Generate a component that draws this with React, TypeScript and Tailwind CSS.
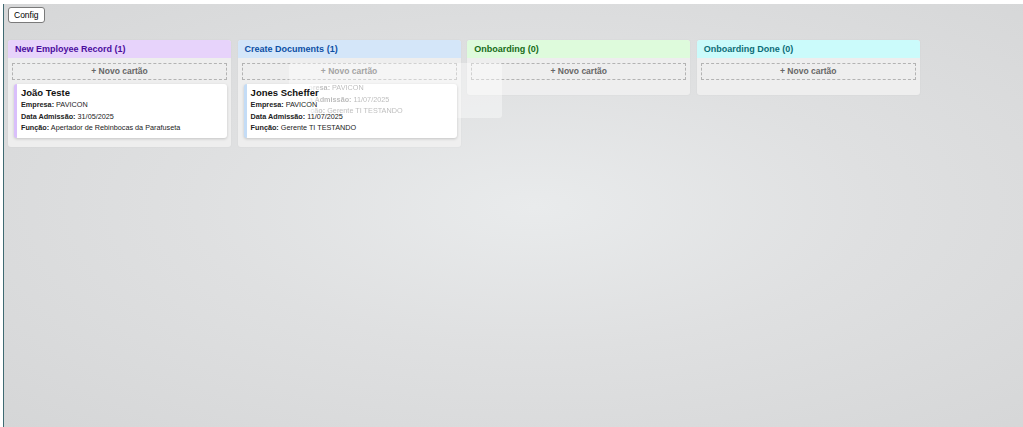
import React from 'react';

type Card = {
  id: string;
  nome: string;
  empresa: string;
  admissao: string;
  funcao: string;
};

type Column = {
  id: string;
  title: string;
  headerBg: string;
  titleColor: string;
  accent: string;
  cards: Card[];
};

const columns: Column[] = [
  {
    id: 'new',
    title: 'New Employee Record',
    headerBg: 'bg-[#e7d3fb]',
    titleColor: 'text-[#4c0d9e]',
    accent: 'border-l-[#d9bffb]',
    cards: [
      {
        id: '1',
        nome: 'João Teste',
        empresa: 'PAVICON',
        admissao: '31/05/2025',
        funcao: 'Apertador de Rebinbocas da Parafuseta',
      },
    ],
  },
  {
    id: 'docs',
    title: 'Create Documents',
    headerBg: 'bg-[#d4e6f9]',
    titleColor: 'text-[#0c4fa5]',
    accent: 'border-l-[#c4dcf6]',
    cards: [
      {
        id: '2',
        nome: 'Jones Scheffer',
        empresa: 'PAVICON',
        admissao: '11/07/2025',
        funcao: 'Gerente TI TESTANDO',
      },
    ],
  },
  {
    id: 'onb',
    title: 'Onboarding',
    headerBg: 'bg-[#defbdc]',
    titleColor: 'text-[#166c17]',
    accent: 'border-l-[#bff0bd]',
    cards: [],
  },
  {
    id: 'done',
    title: 'Onboarding Done',
    headerBg: 'bg-[#cbfbfb]',
    titleColor: 'text-[#0b6d77]',
    accent: 'border-l-[#b2f1f1]',
    cards: [],
  },
];

const CardLines = ({ card }: { card: Card }) => (
  <div className="text-[7.25px] leading-[11.5px] text-[#222]">
    <div>
      <span className="font-bold">Empresa:</span> {card.empresa}
    </div>
    <div>
      <span className="font-bold">Data Admissão:</span> {card.admissao}
    </div>
    <div>
      <span className="font-bold">Função:</span> {card.funcao}
    </div>
  </div>
);

const App = () => {
  const dragged = columns[1].cards[0];

  return (
    <div
      className="h-screen w-full bg-white pl-[3px] pt-[4px]"
      style={{ fontFamily: '"Liberation Sans", Arial, sans-serif' }}
    >
      <div className="relative h-full border-l border-[#3f6a72] bg-[radial-gradient(ellipse_at_52%_48%,#e9ebec_0%,#dfe0e1_45%,#d5d6d7_100%)] pl-[4px] pt-[3px]">
        <button className="block h-[16px] rounded-[3px] border border-[#7a7a7a] bg-white px-[5px] text-[8.5px] leading-none text-black">
          Config
        </button>

        <div className="mt-[17px] flex items-start gap-[6.6px]">
          {columns.map((col) => (
            <div key={col.id} className="w-[223px] rounded-[3px] bg-[#efefef]/90 shadow-[0_0_2px_rgba(0,0,0,0.06)]">
              <div className={`h-[18px] rounded-t-[3px] px-[7px] text-[9px] font-bold leading-[18px] ${col.headerBg} ${col.titleColor}`}>
                {col.title} ({col.cards.length})
              </div>
              <div className="px-[4px] pb-[9px] pt-[5px]">
                <button className="block h-[17px] w-full border border-dashed border-[#b3b3b3] text-center text-[8.5px] font-bold leading-[15px] text-[#666]">
                  + Novo cartão
                </button>
                <div className="mt-[4px] flex min-h-[2px] flex-col gap-[4px] pl-[2px]">
                  {col.cards.map((card) => (
                    <div
                      key={card.id}
                      className={`relative z-[2] h-[54px] rounded-[3px] border-l-[3px] bg-white pl-[4px] pt-[3px] shadow-[0_1px_3px_rgba(0,0,0,0.18)] ${col.accent}`}
                    >
                      <div className="text-[9.5px] font-semibold leading-[12px] text-[#111]">{card.nome}</div>
                      <CardLines card={card} />
                    </div>
                  ))}
                </div>
              </div>
            </div>
          ))}
        </div>

        {/* drag preview: faded box behind the cards, faded text above them */}
        <div className="pointer-events-none absolute left-[285px] top-[59px] z-[1] h-[55px] w-[213px] rounded-[3px] bg-white/40" />
        <div
          className="pointer-events-none absolute left-[293px] top-[78px] z-[3] w-[205px] opacity-30"
          style={{ maskImage: 'linear-gradient(to right, transparent 10px, black 26px)' }}
        >
          <CardLines card={dragged} />
        </div>
      </div>
    </div>
  );
};

export default App;
